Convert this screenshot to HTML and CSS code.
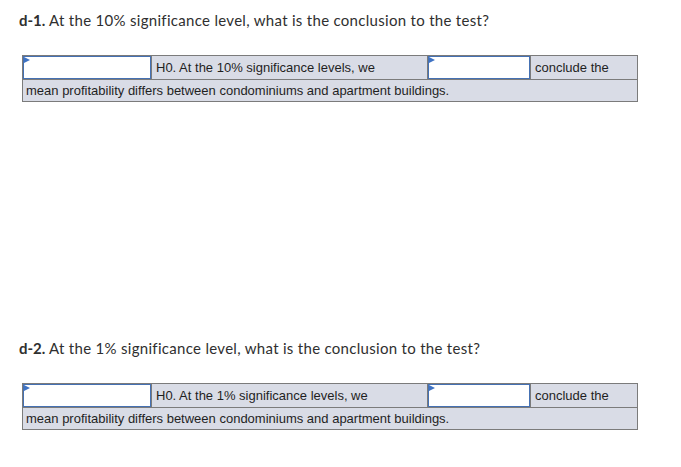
FILE: index.html
```html
<!DOCTYPE html>
<html>
<head>
<meta charset="utf-8">
<link rel="stylesheet" href="styles.css">
</head>
<body>
<div class="question first">
  <p class="prompt"><b>d-1.</b> At the 10% significance level, what is the conclusion to the test?</p>
  <div class="answer">
    <div class="row">
      <div class="cell select-cell wide"><span class="select"></span></div>
      <div class="cell text-cell mid">H0. At the 10% significance levels, we</div>
      <div class="cell select-cell narrow"><span class="select"></span></div>
      <div class="cell text-cell last">conclude the</div>
    </div>
    <div class="row full">
      <div class="cell text-cell">mean profitability differs between condominiums and apartment buildings.</div>
    </div>
  </div>
</div>
<div class="question second">
  <p class="prompt"><b>d-2.</b> At the 1% significance level, what is the conclusion to the test?</p>
  <div class="answer">
    <div class="row">
      <div class="cell select-cell wide"><span class="select"></span></div>
      <div class="cell text-cell mid">H0. At the 1% significance levels, we</div>
      <div class="cell select-cell narrow"><span class="select"></span></div>
      <div class="cell text-cell last">conclude the</div>
    </div>
    <div class="row full">
      <div class="cell text-cell">mean profitability differs between condominiums and apartment buildings.</div>
    </div>
  </div>
</div>
</body>
</html>
```
FILE: styles.css
```css
html, body {
  margin: 0;
  padding: 0;
  background: #ffffff;
}
body {
  padding: 10px 0 0 19px;
}
.question.second {
  margin-top: 236px;
}
.prompt {
  margin: 0;
  font-family: Lato, "Open Sans", sans-serif;
  font-size: 15px;
  letter-spacing: 0.3px;
  line-height: 20px;
  color: #2f2f2f;
}
.prompt b {
  font-weight: 700;
  letter-spacing: 0;
}
.answer {
  margin: 25px 0 0 3px;
  width: 616px;
  box-sizing: border-box;
  border: 1px solid #7b7b7b;
  background: #d9dce6;
  font-family: "Liberation Sans", Arial, sans-serif;
  font-size: 13px;
  color: #1f1f1f;
}
.row {
  display: flex;
  height: 23px;
}
.row + .row {
  border-top: 1px solid #7b7b7b;
  height: 21px;
}
.cell {
  box-sizing: border-box;
  display: flex;
  align-items: center;
}
.text-cell {
  padding-left: 4px;
}
.row.full .text-cell {
  padding-left: 3px;
}
.wide { width: 128px; }
.mid { width: 277px; border-left: 1px solid #7b7b7b; border-right: 1px solid #7b7b7b; }
.narrow { width: 102px; }
.last { flex: 1; border-left: 1px solid #7b7b7b; }
.select-cell {
  padding: 0;
  align-items: stretch;
}
.select {
  position: relative;
  flex: 1;
  background: #ffffff;
  border: 1.5px solid #4571b3;
}
.select::before {
  content: "";
  position: absolute;
  left: 0;
  top: 0;
  width: 0;
  height: 0;
  border-top: 3px solid transparent;
  border-bottom: 3px solid transparent;
  border-left: 6px solid #3f73c4;
}
```
